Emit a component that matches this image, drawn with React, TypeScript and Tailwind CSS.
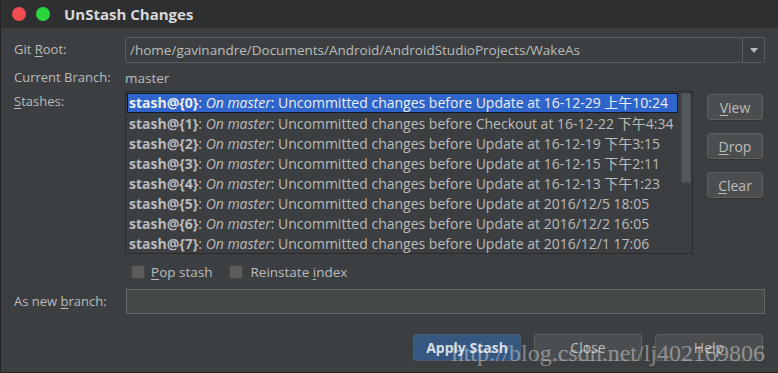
import React from 'react';

const stashes = [
  { id: 0, action: 'Update', when: '16-12-29 上午10:24' },
  { id: 1, action: 'Checkout', when: '16-12-22 下午4:34' },
  { id: 2, action: 'Update', when: '16-12-19 下午3:15' },
  { id: 3, action: 'Update', when: '16-12-15 下午2:11' },
  { id: 4, action: 'Update', when: '16-12-13 下午1:23' },
  { id: 5, action: 'Update', when: '2016/12/5 18:05' },
  { id: 6, action: 'Update', when: '2016/12/2 16:05' },
  { id: 7, action: 'Update', when: '2016/12/1 17:06' },
];

const font = { fontFamily: '"Open Sans", "Noto Sans CJK SC", sans-serif' };

const SideButton = ({ label, u }: { label: string; u: string }) => (
  <button className="h-[26px] w-[56px] rounded-[3px] border border-[#5e6060] bg-[#4b4e50] text-[14px] text-[#bbbbbb] shadow-[0_1px_0_#333]">
    <span className="underline underline-offset-2">{u}</span>
    {label.slice(1)}
  </button>
);

const App = () => {
  return (
    <div className="w-[778px] h-[373px] bg-[#3c3f41] border-l border-b border-[#232425] flex flex-col overflow-hidden" style={font}>
      {/* title bar */}
      <div className="h-[28px] bg-[#2d2f31] flex items-center pl-[11px] shrink-0">
        <span className="w-[14px] h-[14px] rounded-full bg-[#f14c50]" />
        <span className="w-[14px] h-[14px] rounded-full bg-[#29d53c] ml-[10px]" />
        <span className="ml-[14px] text-[15px] font-bold text-[#d8d8d8]">UnStash Changes</span>
      </div>

      <div className="flex flex-col pl-[13px] pr-[13px] pt-[9px] text-[13px] text-[#bbbbbb]">
        {/* git root */}
        <div className="flex items-center h-[26px]">
          <span className="w-[111px]">
            Git <span className="underline underline-offset-2">R</span>oot:
          </span>
          <div className="flex-1 h-[26px] flex border border-[#5a5d5f] rounded-[2px] bg-[#3c3f41]">
            <span className="flex-1 pl-[4px] leading-[24px] text-[13.5px]">/home/gavinandre/Documents/Android/AndroidStudioProjects/WakeAs</span>
            <span className="w-[22px] border-l border-[#5a5d5f] flex items-center justify-center">
              <span className="w-0 h-0 border-l-[4px] border-r-[4px] border-t-[5px] border-l-transparent border-r-transparent border-t-[#bbbbbb]" />
            </span>
          </div>
        </div>

        {/* branch */}
        <div className="flex items-center h-[20px] mt-[5px]">
          <span className="w-[111px]">Current Branch:</span>
          <span className="text-[13.5px]">master</span>
        </div>

        {/* stashes */}
        <div className="flex mt-[3px]">
          <span className="w-[111px] pt-[1px]">
            <span className="underline underline-offset-2">S</span>tashes:
          </span>
          <div className="w-[568px] h-[163px] border border-[#2b2b2b] bg-[#3c3f41] flex p-[1px] text-[14px]">
            <div className="flex-1 flex flex-col min-w-0">
              {stashes.map((s) => (
                <div
                  key={s.id}
                  className={
                    s.id === 0
                      ? 'h-[20px] pl-[1px] leading-[18px] bg-[#2f65ca] border border-[#0e1a2e] text-[#ececec] whitespace-nowrap'
                      : 'h-[20px] pl-[1px] leading-[20px] whitespace-nowrap border border-transparent'
                  }
                >
                  <span className="font-bold">stash@{'{'}{s.id}{'}'}</span>: <span className="italic">On master</span>: Uncommitted changes before {s.action} at {s.when}
                </div>
              ))}
            </div>
            <div className="w-[13px] pl-[3px] shrink-0">
              <div className="w-[10px] h-[90px] bg-[#56595b] border border-[#4a4d4f]" />
            </div>
          </div>
          <div className="flex flex-col gap-[13px] ml-[14px] mt-[3px]">
            <SideButton label="View" u="V" />
            <SideButton label="Drop" u="D" />
            <SideButton label="Clear" u="C" />
          </div>
        </div>

        {/* checkboxes */}
        <div className="flex items-center h-[20px] mt-[8px] pl-[117px] text-[13.5px]">
          <span className="w-[14px] h-[14px] rounded-[2px] border border-[#444] bg-[#5a5c5e]" />
          <span className="ml-[6px]">
            <span className="underline underline-offset-2">P</span>op stash
          </span>
          <span className="w-[14px] h-[14px] rounded-[2px] border border-[#444] bg-[#5a5c5e] ml-[17px]" />
          <span className="ml-[7px]">
            Reinstate <span className="underline underline-offset-2">i</span>ndex
          </span>
        </div>

        {/* new branch */}
        <div className="flex items-center h-[25px] mt-[7px]">
          <span className="w-[112px]">
            As new <span className="underline underline-offset-2">b</span>ranch:
          </span>
          <div className="flex-1 h-[25px] border border-[#646769] bg-[#45494a]" />
        </div>

        {/* bottom buttons */}
        <div className="relative flex justify-end gap-[13px] mt-[20px] pr-[2px]">
          <button className="h-[27px] w-[108px] rounded-[3px] border border-[#4b5c70] bg-[#365880] text-[14px] font-bold text-[#d6dde6]">
            Apply Stash
          </button>
          <button className="h-[27px] w-[108px] rounded-[3px] border border-[#5e6060] bg-[#4b4e50] text-[14px] text-[#bbbbbb]">
            Close
          </button>
          <button className="h-[27px] w-[108px] rounded-[3px] border border-[#5e6060] bg-[#4b4e50] text-[14px] text-[#bbbbbb]">
            Help
          </button>
          <span
            className="absolute right-[0px] top-[1px] text-[24px] text-white/40 pointer-events-none whitespace-nowrap"
            style={{ fontFamily: '"Liberation Serif", "DejaVu Serif", serif' }}
          >
            http://blog.csdn.net/lj402169806
          </span>
        </div>
      </div>
    </div>
  );
};

export default App;
